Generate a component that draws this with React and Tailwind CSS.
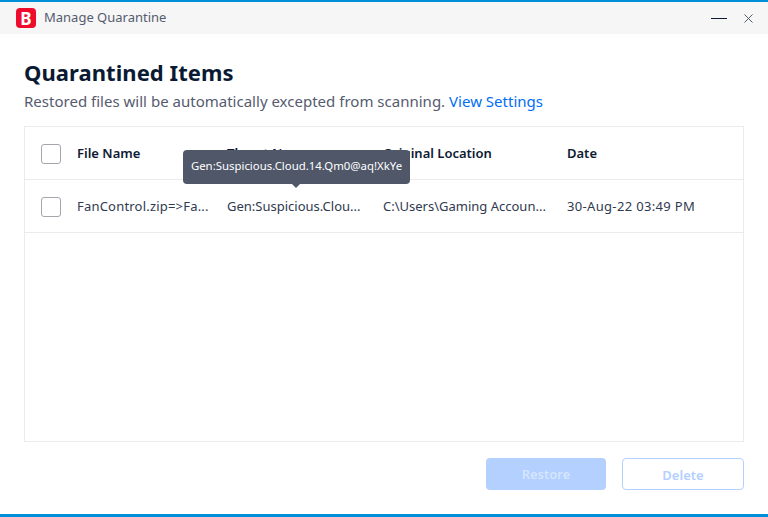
import { X } from "lucide-react"

function Checkbox() {
  return <div className="w-5 h-5 rounded-[3px] border border-[#a3a6ad] bg-white shrink-0" />
}

export default function App() {
  return (
    <div className="w-[768px] h-[517px] bg-white flex flex-col font-['Noto_Sans',sans-serif] overflow-hidden">
      <div className="h-[2px] shrink-0 bg-[#0090d9]" />

      {/* Title bar */}
      <div className="h-8 shrink-0 bg-[#f6f6f7] flex items-center pl-4 pr-3">
        <div className="w-5 h-5 rounded-[4px] bg-[#ed0c2c] flex items-center justify-center">
          <span className="text-white text-[17px] font-bold leading-none">B</span>
        </div>
        <span className="ml-2 text-[13px] text-[#555b6e]">Manage Quarantine</span>
        <div className="ml-auto flex items-center gap-[14px]">
          <div className="w-4 h-px bg-[#0e1a33]" />
          <X className="w-[15px] h-[15px] text-[#555b6e]" strokeWidth={1.6} />
        </div>
      </div>

      <div className="flex-1 min-h-0 flex flex-col px-6 pt-[23px] pb-[24px]">
        <h1 className="text-[22px] leading-[30px] font-bold text-[#0b1a33] tracking-[0.05px]">Quarantined Items</h1>
        <p className="text-[15px] leading-[24px] text-[#555b6e] mt-[2px] tracking-[0.01px]">
          Restored files will be automatically excepted from scanning.{" "}
          <span className="text-[#006ef5]">View Settings</span>
        </p>

        {/* Table */}
        <div className="relative mt-[13px] h-[316px] border border-[#ebebed]">
          <div className="h-[53px] flex items-center pl-4 pt-[2px] border-b border-[#ebebed] text-[13px] font-semibold text-[#0e1a33]">
            <Checkbox />
            <span className="ml-4 w-[150px]">File Name</span>
            <span className="w-[156px]">Threat Name</span>
            <span className="w-[184px]">Original Location</span>
            <span>Date</span>
          </div>
          <div className="h-[53px] flex items-center pl-4 pt-[2px] border-b border-[#ebebed] text-[13px] text-[#303a4f]">
            <Checkbox />
            <span className="ml-4 w-[150px] tracking-[0.2px]">FanControl.zip=&gt;Fa...</span>
            <span className="w-[156px]">Gen:Suspicious.Clou...</span>
            <span className="w-[184px]">C:\Users\Gaming Accoun...</span>
            <span className="tracking-[0.33px]">30-Aug-22 03:49 PM</span>
          </div>

          {/* Tooltip */}
          <div className="absolute left-[158px] top-[23px] h-[34px] w-[227px] pb-[2px] rounded-[4px] bg-[#505769] flex items-center justify-center text-[11.4px] text-white">
            Gen:Suspicious.Cloud.14.Qm0@aq!XkYe
            <div className="absolute left-[108px] -bottom-[4px] w-0 h-0 border-l-[5px] border-r-[5px] border-t-[5px] border-l-transparent border-r-transparent border-t-[#505769]" />
          </div>
        </div>

        {/* Buttons */}
        <div className="mt-4 flex justify-end gap-4">
          <button className="w-[120px] h-8 pt-[2px] rounded-[4px] bg-[#b3d0ff] text-[13px] font-semibold text-[#d5e5ff]">Restore</button>
          <button className="w-[122px] h-8 pt-[3px] rounded-[4px] border border-[#b3d0ff] bg-white text-[13px] font-semibold text-[#b3d0ff]">Delete</button>
        </div>
      </div>

      <div className="h-[3px] shrink-0 bg-[#0090d9]" />
    </div>
  )
}
